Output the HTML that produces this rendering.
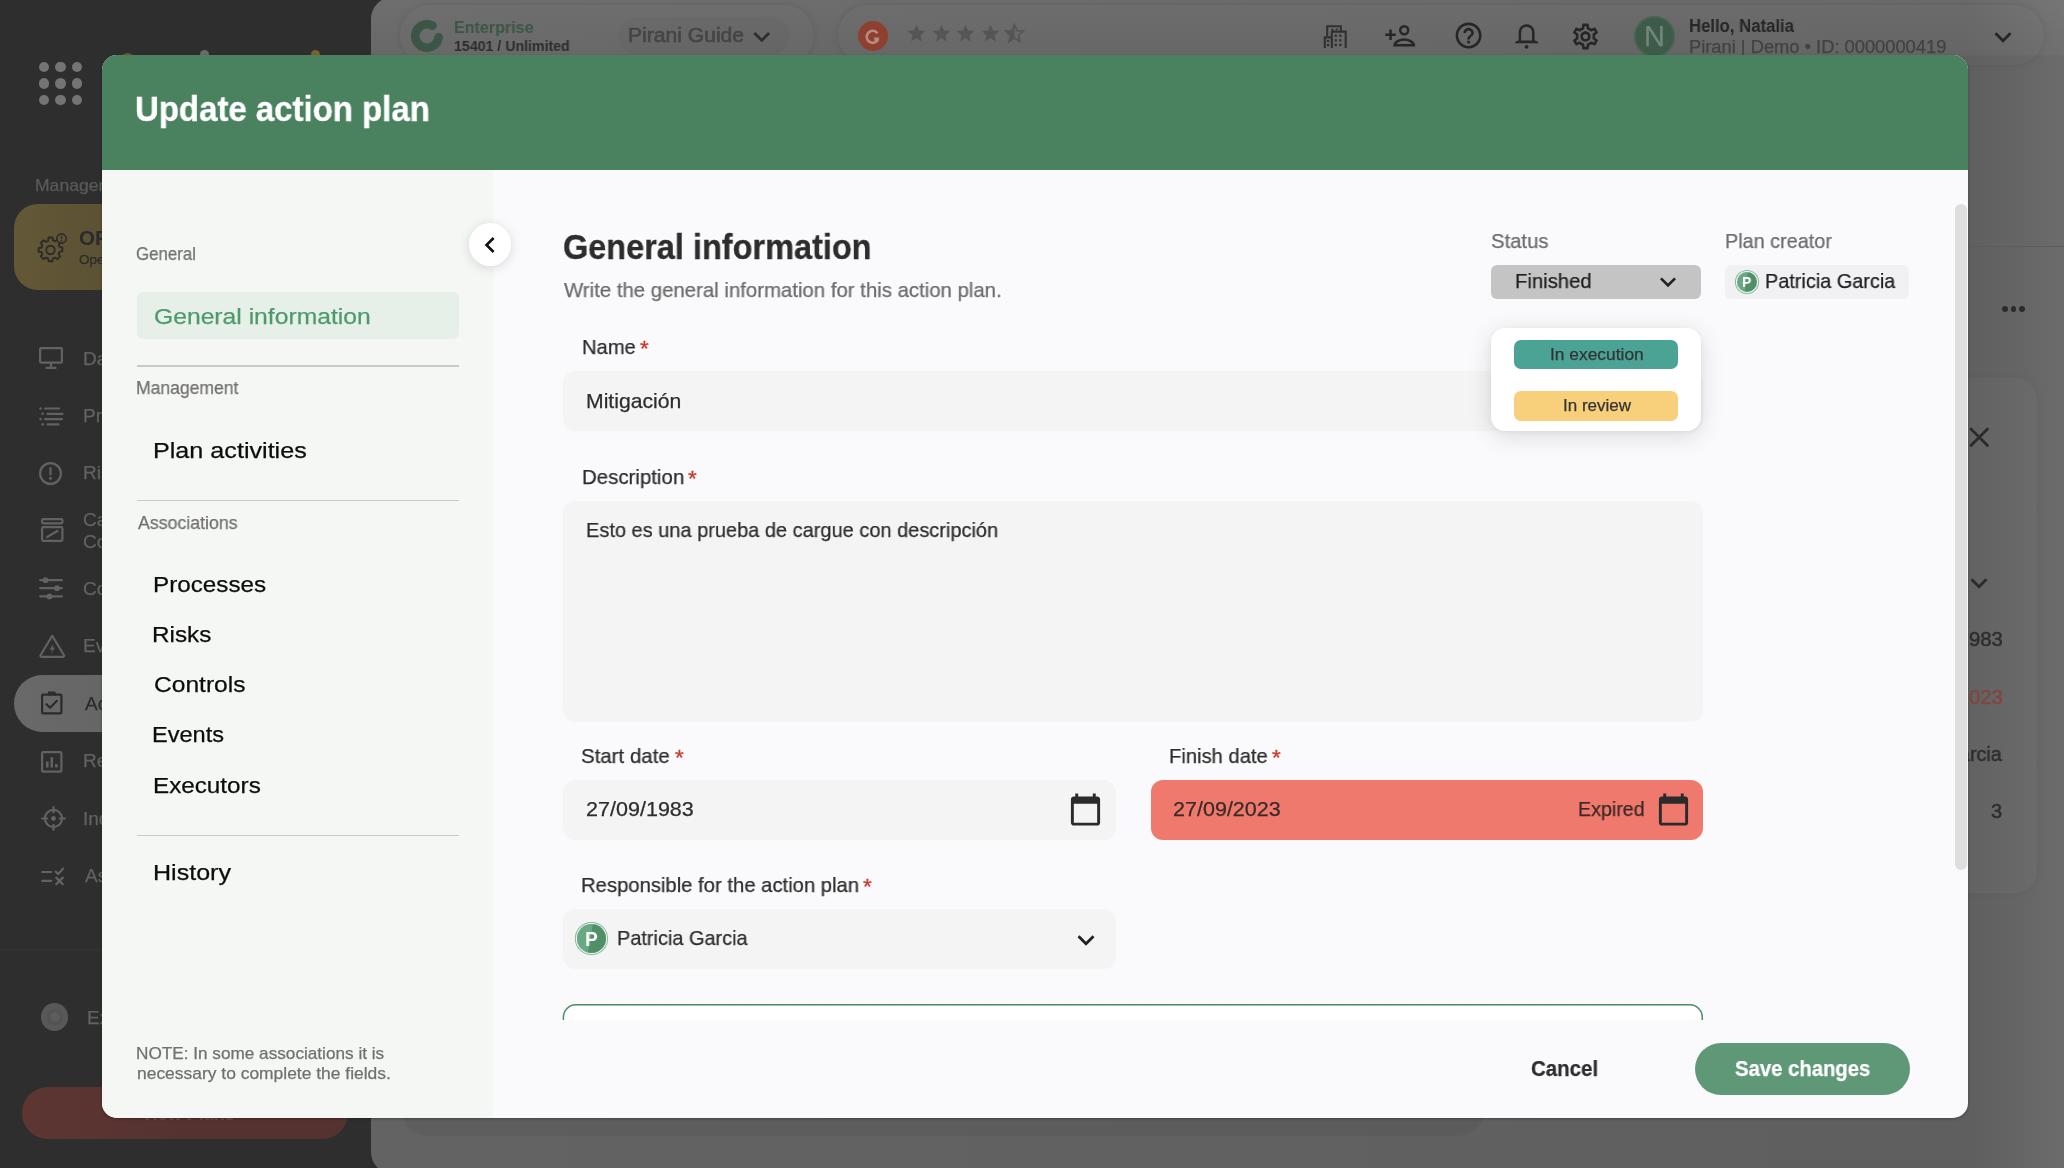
<!DOCTYPE html>
<html><head><meta charset="utf-8"><title>Update action plan</title>
<style>
html,body{margin:0;padding:0;}
body{width:2064px;height:1168px;overflow:hidden;position:relative;background:#2e2e2e;font-family:"Liberation Sans", sans-serif;}
.t{position:absolute;white-space:pre;transform-origin:0 50%;font-family:"Liberation Sans", sans-serif;will-change:transform;}
</style></head><body>
<div id="bg">
<div style="position:absolute;left:371px;top:-3px;width:1700px;height:1177px;background:linear-gradient(180deg,rgba(255,255,255,0.075) 0px,rgba(255,255,255,0.03) 58px,rgba(255,255,255,0) 59px),linear-gradient(90deg,#636363 0%,#5f5f5f 94%,#6b6c6b 100%);border-radius:0px;border-radius:22px 0 0 22px;"></div>
<div style="position:absolute;left:400px;top:5px;width:414px;height:60px;background:rgba(255,255,255,0.012);border-radius:30px;box-shadow:0 0 6px rgba(0,0,0,0.10);"></div>
<div style="position:absolute;left:617.5px;top:17px;width:172.5px;height:38px;background:rgba(0,0,0,0.02);border-radius:19px;"></div>
<div style="position:absolute;left:837.5px;top:5px;width:1206px;height:60px;background:rgba(255,255,255,0.012);border-radius:30px;box-shadow:0 0 6px rgba(0,0,0,0.10);"></div>
<div style="position:absolute;left:1968px;top:246px;width:96px;height:1px;background:#5c5c5c;border-radius:0px;"></div>
<div style="position:absolute;left:400px;top:1000px;width:1085px;height:136px;background:rgba(0,0,0,0.045);border-radius:28px;"></div>
<div style="position:absolute;left:1500px;top:378px;width:537px;height:515px;background:rgba(255,255,255,0.022);border-radius:22px;box-shadow:0 0 8px rgba(0,0,0,0.05);"></div>
<div style="position:absolute;left:38.75px;top:61.75px;width:10.5px;height:10.5px;background:#747474;border-radius:6px;"></div>
<div style="position:absolute;left:38.75px;top:78.0px;width:10.5px;height:10.5px;background:#747474;border-radius:6px;"></div>
<div style="position:absolute;left:38.75px;top:94.5px;width:10.5px;height:10.5px;background:#747474;border-radius:6px;"></div>
<div style="position:absolute;left:55.0px;top:61.75px;width:10.5px;height:10.5px;background:#747474;border-radius:6px;"></div>
<div style="position:absolute;left:55.0px;top:78.0px;width:10.5px;height:10.5px;background:#747474;border-radius:6px;"></div>
<div style="position:absolute;left:55.0px;top:94.5px;width:10.5px;height:10.5px;background:#747474;border-radius:6px;"></div>
<div style="position:absolute;left:71.5px;top:61.75px;width:10.5px;height:10.5px;background:#747474;border-radius:6px;"></div>
<div style="position:absolute;left:71.5px;top:78.0px;width:10.5px;height:10.5px;background:#747474;border-radius:6px;"></div>
<div style="position:absolute;left:71.5px;top:94.5px;width:10.5px;height:10.5px;background:#747474;border-radius:6px;"></div>
<div style="position:absolute;left:121px;top:53.3px;width:13px;height:12px;background:#74502c;border-radius:7px;"></div>
<div style="position:absolute;left:200px;top:50px;width:9px;height:12px;background:#6c6c6c;border-radius:5px;"></div>
<div style="position:absolute;left:311px;top:50px;width:9px;height:12px;background:#7d6230;border-radius:5px;"></div>
<div class="t" style="left:35.4px;top:175px;font-size:17px;line-height:22px;height:22px;color:#5a5a5a;transform:scaleX(1.0327);-webkit-text-stroke:0.25px #5a5a5a;">Management</div>
<div style="position:absolute;left:14.4px;top:204.2px;width:343px;height:86.1px;background:linear-gradient(90deg,#635836,#5a5034 30%);border-radius:24px;"></div>
<svg style="position:absolute;left:37.5px;top:232.5px;overflow:visible;" width="29" height="29" viewBox="0 0 29 29"><g fill="none" stroke="#2b2b2b" stroke-width="1.9" stroke-linejoin="round"><circle cx="12.5" cy="17" r="4.2"/><path d="M10.6 6.5h3.8l.6 2.9 2 .9 2.5-1.6 2.7 2.7-1.6 2.5.9 2 2.9.6v3.8l-2.9.6-.9 2 1.6 2.5-2.7 2.7-2.5-1.6-2 .9-.6 2.9h-3.8l-.6-2.9-2-.9-2.5 1.6-2.7-2.7 1.6-2.5-.9-2L.6 20.9v-3.8l2.9-.6.9-2-1.6-2.5 2.7-2.7 2.5 1.6 2-.9z" transform="translate(0,-2)"/></g><circle cx="23.5" cy="5.5" r="4.6" fill="#615636" stroke="#2b2b2b" stroke-width="1.6"/><rect x="22.8" y="2.8" width="1.5" height="3.4" fill="#2b2b2b"/><rect x="22.8" y="7" width="1.5" height="1.4" fill="#2b2b2b"/></svg>
<div class="t" style="left:79.1px;top:224px;font-size:20.5px;line-height:27px;height:27px;font-weight:700;color:#2b2b2b;">ORM</div>
<div class="t" style="left:79.4px;top:251px;font-size:13.5px;line-height:18px;height:18px;color:#2b2b2b;-webkit-text-stroke:0.25px #2b2b2b;">Operational risk</div>
<div style="position:absolute;left:14px;top:674.6px;width:343px;height:57.6px;background:linear-gradient(90deg,#696969,#626262 60%);border-radius:29px;"></div>
<div class="t" style="left:83.3px;top:346px;font-size:19px;line-height:25px;height:25px;color:#626262;-webkit-text-stroke:0.25px #626262;">Dashboard</div>
<div class="t" style="left:83.3px;top:403px;font-size:19px;line-height:25px;height:25px;color:#626262;-webkit-text-stroke:0.25px #626262;">Processes</div>
<div class="t" style="left:83.3px;top:460px;font-size:19px;line-height:25px;height:25px;color:#626262;-webkit-text-stroke:0.25px #626262;">Risks</div>
<div class="t" style="left:83.1px;top:507px;font-size:19px;line-height:25px;height:25px;color:#626262;-webkit-text-stroke:0.25px #626262;">Causes and</div>
<div class="t" style="left:83.1px;top:529px;font-size:19px;line-height:25px;height:25px;color:#626262;-webkit-text-stroke:0.25px #626262;">Consequences</div>
<div class="t" style="left:83.1px;top:576px;font-size:19px;line-height:25px;height:25px;color:#626262;-webkit-text-stroke:0.25px #626262;">Controls</div>
<div class="t" style="left:83.3px;top:633px;font-size:19px;line-height:25px;height:25px;color:#626262;-webkit-text-stroke:0.25px #626262;">Events</div>
<div class="t" style="left:84.8px;top:691px;font-size:19px;line-height:25px;height:25px;color:#2b2b2b;-webkit-text-stroke:0.25px #2b2b2b;">Action plans</div>
<div class="t" style="left:83.3px;top:748px;font-size:19px;line-height:25px;height:25px;color:#626262;-webkit-text-stroke:0.25px #626262;">Reports</div>
<div class="t" style="left:83.1px;top:806px;font-size:19px;line-height:25px;height:25px;color:#626262;-webkit-text-stroke:0.25px #626262;">Indicators</div>
<div class="t" style="left:84.8px;top:863px;font-size:19px;line-height:25px;height:25px;color:#626262;-webkit-text-stroke:0.25px #626262;">Assurance</div>
<svg style="position:absolute;left:38.5px;top:347px;overflow:visible;" width="24" height="22" viewBox="0 0 24 22"><g fill="none" stroke="#626262" stroke-width="2.2" stroke-linecap="round" stroke-linejoin="round"><rect x="1.1" y="1.1" width="21.8" height="14.5" rx="1"/><path d="M12 16v4.5M7.5 20.9h9"/></g></svg>
<svg style="position:absolute;left:39px;top:406.5px;overflow:visible;" width="25" height="19" viewBox="0 0 25 19"><g fill="none" stroke="#626262" stroke-width="2.2" stroke-linecap="round" stroke-linejoin="round"><path d="M6 1.5h14M8.5 6.8h15M6 12.1h17M8.5 17.4h11"/></g><g fill="#626262"><circle cx="1.6" cy="1.5" r="1.3"/><circle cx="3.6" cy="6.8" r="1.3"/><circle cx="1.6" cy="12.1" r="1.3"/><circle cx="3.6" cy="17.4" r="1.3"/></g></svg>
<svg style="position:absolute;left:38.5px;top:461.5px;overflow:visible;" width="23" height="23" viewBox="0 0 23 23"><g fill="none" stroke="#626262" stroke-width="2.2" stroke-linecap="round" stroke-linejoin="round"><circle cx="11.5" cy="11.5" r="10.4"/><path d="M11.5 6v6.5"/></g><circle cx="11.5" cy="16.3" r="1.5" fill="#626262"/></svg>
<svg style="position:absolute;left:40.6px;top:518px;overflow:visible;" width="22.5" height="24" viewBox="0 0 22.5 24"><g fill="none" stroke="#626262" stroke-width="2.2" stroke-linecap="round" stroke-linejoin="round"><rect x="1.1" y="1.1" width="20.3" height="4.2" rx="1.2"/><rect x="1.1" y="9.2" width="20.3" height="13.6" rx="1.2"/><path d="M6 19l10.5-6"/></g></svg>
<svg style="position:absolute;left:38.5px;top:577px;overflow:visible;" width="24" height="23" viewBox="0 0 24 23"><g fill="none" stroke="#626262" stroke-width="2.2" stroke-linecap="round" stroke-linejoin="round"><path d="M1.2 3.2h21.6M1.2 11.2h21.6M1.2 19.4h21.6"/></g><g fill="#626262"><circle cx="6.5" cy="3.2" r="2.9"/><circle cx="18" cy="11.2" r="2.9"/><circle cx="10.5" cy="19.4" r="2.9"/></g></svg>
<svg style="position:absolute;left:38.5px;top:634px;overflow:visible;" width="26.5" height="24" viewBox="0 0 26.5 24"><g fill="none" stroke="#626262" stroke-width="2.2" stroke-linecap="round" stroke-linejoin="round"><path d="M13.2 1.8L25 21.2a1.2 1.2 0 0 1-1 1.7H2.5a1.2 1.2 0 0 1-1-1.7z"/></g><path d="M14.5 9.5l-4 6h2.6l-1 4 4-6h-2.7z" fill="#626262"/></svg>
<svg style="position:absolute;left:41px;top:690.6px;overflow:visible;" width="21.5" height="23.5" viewBox="0 0 21.5 23.5"><g fill="none" stroke="#2b2b2b" stroke-width="2.2" stroke-linecap="round" stroke-linejoin="round"><rect x="1.1" y="3.6" width="19.3" height="18.8" rx="1.2"/><path d="M8 3.4V1.6h5.5v1.8"/><path d="M5.5 13.2l3.6 3.6 6.8-7"/></g></svg>
<svg style="position:absolute;left:41px;top:750.7px;overflow:visible;" width="21.5" height="21.7" viewBox="0 0 21.5 21.7"><g fill="none" stroke="#626262" stroke-width="2.2" stroke-linecap="round" stroke-linejoin="round"><rect x="1.1" y="1.1" width="19.3" height="19.5" rx="1.2"/><path d="M6.3 16.5V10.5M10.8 16.5V6.2M15.3 16.5V13" stroke-linecap="butt" stroke-width="2.6"/></g></svg>
<svg style="position:absolute;left:40.5px;top:805.8px;overflow:visible;" width="25" height="25" viewBox="0 0 25 25"><g fill="none" stroke="#626262" stroke-width="2.2" stroke-linecap="round" stroke-linejoin="round"><circle cx="12.5" cy="12.5" r="8.6"/><path d="M12.5 1.2v5M12.5 18.8v5M1.2 12.5h5M18.8 12.5h5"/></g><circle cx="12.5" cy="12.5" r="2.4" fill="#626262"/></svg>
<svg style="position:absolute;left:41px;top:866.5px;overflow:visible;" width="23.5" height="19" viewBox="0 0 23.5 19"><g fill="none" stroke="#626262" stroke-width="2.2" stroke-linecap="round" stroke-linejoin="round"><path d="M1.2 5h9M1.2 13.8h9"/><path d="M14.8 4.6l2.4 2.4 5-5.4M15.2 10.6l6.6 6.6M21.8 10.6l-6.6 6.6"/></g></svg>
<div style="position:absolute;left:0px;top:949px;width:371px;height:1px;background:#343434;border-radius:0px;"></div>
<div style="position:absolute;left:40.85px;top:1003.25px;width:27.5px;height:27.5px;background:#585858;border-radius:14px;"></div>
<div style="position:absolute;left:46.6px;top:1009px;width:16px;height:16px;background:#505050;border-radius:8px;border:3px solid #535353;box-sizing:border-box;background:#5c5c5c;"></div>
<div class="t" style="left:86.8px;top:1005px;font-size:19px;line-height:25px;height:25px;color:#626262;-webkit-text-stroke:0.25px #626262;">Explore</div>
<div style="position:absolute;left:21.8px;top:1087px;width:326px;height:51.7px;background:linear-gradient(90deg,#5d3632,#553230 50%);border-radius:26px;"></div>
<div class="t" style="left:140.5px;top:1101px;font-size:19px;line-height:25px;height:25px;font-weight:700;color:#6e504c;transform:scaleX(0.9484);">View Plans</div>
<svg style="position:absolute;left:411px;top:20px;overflow:visible;" width="32" height="32" viewBox="0 0 32 32"><path d="M27.64 17.22A11.7 11.7 0 1 1 21.49 5.67" fill="none" stroke="#3b5646" stroke-width="8.6" stroke-linecap="round"/></svg>
<div class="t" style="left:453.6px;top:17px;font-size:16.5px;line-height:21px;height:21px;font-weight:700;color:#3b5646;transform:scaleX(0.9745);">Enterprise</div>
<div class="t" style="left:453.8px;top:37px;font-size:14.5px;line-height:19px;height:19px;font-weight:700;color:#2d2d2d;transform:scaleX(0.9768);">15401 / Unlimited</div>
<div class="t" style="left:627.9px;top:21px;font-size:20.5px;line-height:27px;height:27px;color:#454545;transform:scaleX(1.0285);-webkit-text-stroke:0.6px #454545;">Pirani Guide</div>
<svg style="position:absolute;left:745.4px;top:19.5px;" width="33.5" height="33.5" viewBox="0 0 24 24"><path d="M7.41 8.59L12 13.17l4.59-4.58L18 10l-6 6-6-6 1.41-1.41z" fill="#2d2d2d"/></svg>
<div style="position:absolute;left:858.25px;top:20.5px;width:30px;height:30px;background:#8f3f30;border-radius:15px;"></div>
<svg style="position:absolute;left:864px;top:27px;overflow:visible;" width="19" height="18" viewBox="0 0 19 18"><path d="M13.5 6.2A6 6 0 1 0 14.3 12" fill="none" stroke="#b88a80" stroke-width="2.6"/><path d="M10 10.5h5.5l-2 3.5h-3z" fill="#b88a80"/></svg>
<svg style="position:absolute;left:906.25px;top:22.5px;" width="21" height="21" viewBox="0 0 24 24"><path d="M12 17.27L18.18 21l-1.64-7.03L22 9.24l-7.19-.61L12 2 9.19 8.63 2 9.24l5.46 4.73L5.82 21z" fill="#555555"/></svg>
<svg style="position:absolute;left:930.75px;top:22.5px;" width="21" height="21" viewBox="0 0 24 24"><path d="M12 17.27L18.18 21l-1.64-7.03L22 9.24l-7.19-.61L12 2 9.19 8.63 2 9.24l5.46 4.73L5.82 21z" fill="#555555"/></svg>
<svg style="position:absolute;left:955.0px;top:22.5px;" width="21" height="21" viewBox="0 0 24 24"><path d="M12 17.27L18.18 21l-1.64-7.03L22 9.24l-7.19-.61L12 2 9.19 8.63 2 9.24l5.46 4.73L5.82 21z" fill="#555555"/></svg>
<svg style="position:absolute;left:979.5px;top:22.5px;" width="21" height="21" viewBox="0 0 24 24"><path d="M12 17.27L18.18 21l-1.64-7.03L22 9.24l-7.19-.61L12 2 9.19 8.63 2 9.24l5.46 4.73L5.82 21z" fill="#555555"/></svg>
<svg style="position:absolute;left:1004.0px;top:22.5px" width="21" height="21" viewBox="0 0 24 24"><path d="M12 17.27L18.18 21l-1.64-7.03L22 9.24l-7.19-.61L12 2 9.19 8.63 2 9.24l5.46 4.73L5.82 21z" fill="none" stroke="#555555" stroke-width="2"/><path d="M12 17.27V2L9.19 8.63 2 9.24l5.46 4.73L5.82 21z" fill="#555555"/></svg>
<svg style="position:absolute;left:1323px;top:23.5px;overflow:visible;" width="25" height="25" viewBox="0 0 25 25"><g fill="none" stroke="#303030" stroke-width="2.1"><path d="M4.2 12.5V2.2h13.6v5.6"/><path d="M8.8 24V7.6h13.9V24"/><path d="M1.8 24V13.4h7"/><path d="M8.5 4.8l2.2 2M14.5 4.6l-1.6 1.6" stroke-width="1.4"/></g><g fill="#303030"><rect x="3.9" y="15.8" width="2.3" height="2.3"/><rect x="3.9" y="20" width="2.3" height="2.3"/><rect x="11.6" y="10.6" width="2.3" height="2.3"/><rect x="16.2" y="10.6" width="2.3" height="2.3"/><rect x="11.6" y="15.2" width="2.3" height="2.3"/><rect x="16.2" y="15.2" width="2.3" height="2.3"/><rect x="11.6" y="19.8" width="2.3" height="2.3"/><rect x="16.2" y="19.8" width="2.3" height="2.3"/></g></svg>
<svg style="position:absolute;left:1385px;top:24px;overflow:visible;" width="31" height="24" viewBox="0 0 31 24"><g fill="none" stroke="#262626" stroke-width="2.5" stroke-linejoin="round"><path d="M0.3 10.7h10.5M5.55 5.5v10.4"/><circle cx="19.2" cy="6.3" r="4"/><path d="M9.6 21.2c.4-3.6 5-5.6 9.6-5.6s9.2 2 9.6 5.6z" stroke-linejoin="miter"/></g></svg>
<svg style="position:absolute;left:1453.15px;top:20.15px;" width="31.2" height="31.2" viewBox="0 0 24 24"><path d="M11 18h2v-2h-2v2zm1-16C6.48 2 2 6.48 2 12s4.48 10 10 10 10-4.48 10-10S17.52 2 12 2zm0 18c-4.41 0-8-3.59-8-8s3.59-8 8-8 8 3.59 8 8-3.59 8-8 8zm0-14c-2.21 0-4 1.79-4 4h2c0-1.1.9-2 2-2s2 .9 2 2c0 2-3 1.75-3 5h2c0-2.25 3-2.5 3-5 0-2.21-1.79-4-4-4z" fill="#262626"/></svg>
<svg style="position:absolute;left:1514px;top:22px;overflow:visible;" width="26" height="28" viewBox="0 0 26 28"><g fill="none" stroke="#262626" stroke-width="2.5" stroke-linejoin="round"><path d="M5.9 19V10.1a6.7 6.7 0 0 1 13.4 0V19"/><path d="M1.6 20.6l2.2-1.4h17.6l2.2 1.4z" fill="#262626" stroke-width="1.2"/></g><circle cx="12.6" cy="24.8" r="1.9" fill="#262626"/></svg>
<svg style="position:absolute;left:1570px;top:20.5px;" width="31" height="31" viewBox="0 0 24 24"><path d="M19.43 12.98c.04-.32.07-.64.07-.98 0-.34-.03-.66-.07-.98l2.11-1.65c.19-.15.24-.42.12-.64l-2-3.46c-.09-.16-.26-.25-.44-.25-.06 0-.12.01-.17.03l-2.49 1c-.52-.4-1.08-.73-1.69-.98l-.38-2.65C14.46 2.18 14.25 2 14 2h-4c-.25 0-.46.18-.49.42l-.38 2.65c-.61.25-1.17.59-1.69.98l-2.49-1c-.06-.02-.12-.03-.18-.03-.17 0-.34.09-.43.25l-2 3.46c-.13.22-.07.49.12.64l2.11 1.65c-.04.32-.07.65-.07.98 0 .33.03.66.07.98l-2.11 1.65c-.19.15-.24.42-.12.64l2 3.46c.09.16.26.25.44.25.06 0 .12-.01.17-.03l2.49-1c.52.4 1.08.73 1.69.98l.38 2.65c.03.24.24.42.49.42h4c.25 0 .46-.18.49-.42l.38-2.65c.61-.25 1.17-.59 1.69-.98l2.49 1c.06.02.12.03.18.03.17 0 .34-.09.43-.25l2-3.46c.12-.22.07-.49-.12-.64l-2.11-1.65zm-1.98-1.71c.04.31.05.52.05.73 0 .21-.02.43-.05.73l-.14 1.13.89.7 1.08.84-.7 1.21-1.27-.51-1.04-.42-.9.68c-.43.32-.84.56-1.25.73l-1.06.43-.16 1.13-.2 1.35h-1.4l-.19-1.35-.16-1.13-1.06-.43c-.43-.18-.83-.41-1.23-.71l-.91-.7-1.06.43-1.27.51-.7-1.21 1.08-.84.89-.7-.14-1.13c-.03-.31-.05-.54-.05-.74s.02-.43.05-.73l.14-1.13-.89-.7-1.08-.84.7-1.21 1.27.51 1.04.42.9-.68c.43-.32.84-.56 1.25-.73l1.06-.43.16-1.13.2-1.35h1.39l.19 1.35.16 1.13 1.06.43c.43.18.83.41 1.23.71l.91.7 1.06-.43 1.27-.51.7 1.21-1.07.85-.89.7.14 1.13zM12 8c-2.21 0-4 1.79-4 4s1.79 4 4 4 4-1.79 4-4-1.79-4-4-4zm0 6c-1.1 0-2-.9-2-2s.9-2 2-2 2 .9 2 2-.9 2-2 2z" fill="#262626"/></svg>
<div style="position:absolute;left:1633.75px;top:15.5px;width:41px;height:41px;background:#3e5a49;border-radius:21px;box-shadow:inset 0 0 0 1.5px #4b6656;"></div>
<div class="t" style="left:1643.8px;top:17px;font-size:29px;line-height:38px;height:38px;color:#6f887a;-webkit-text-stroke:0.25px #6f887a;">N</div>
<div class="t" style="left:1688.7px;top:15px;font-size:17.5px;line-height:23px;height:23px;font-weight:700;color:#262626;transform:scaleX(0.9544);">Hello, Natalia</div>
<div class="t" style="left:1689.0px;top:36px;font-size:17.6px;line-height:23px;height:23px;color:#424242;transform:scaleX(1.0401);-webkit-text-stroke:0.25px #424242;">Pirani | Demo • ID: 0000000419</div>
<svg style="position:absolute;left:1986.4px;top:19.5px;" width="34" height="34" viewBox="0 0 24 24"><path d="M7.41 8.59L12 13.17l4.59-4.58L18 10l-6 6-6-6 1.41-1.41z" fill="#262626"/></svg>
<div style="position:absolute;left:2002.3px;top:306.1px;width:5.8px;height:5.8px;background:#2b2b2b;border-radius:3px;"></div>
<div style="position:absolute;left:2010.6999999999998px;top:306.1px;width:5.8px;height:5.8px;background:#2b2b2b;border-radius:3px;"></div>
<div style="position:absolute;left:2019.1px;top:306.1px;width:5.8px;height:5.8px;background:#2b2b2b;border-radius:3px;"></div>
<svg style="position:absolute;left:1970px;top:428px;overflow:visible;" width="18.5" height="18.5" viewBox="0 0 18.5 18.5"><path d="M1 1l16.5 16.5M17.5 1L1 17.5" fill="none" stroke="#2b2b2b" stroke-width="2.8" stroke-linecap="round"/></svg>
<svg style="position:absolute;left:1962px;top:566px;" width="34" height="34" viewBox="0 0 24 24"><path d="M7.41 8.59L12 13.17l4.59-4.58L18 10l-6 6-6-6 1.41-1.41z" fill="#2b2b2b"/></svg>
<div class="t" style="left:1900.7px;top:626px;font-size:20px;line-height:26px;height:26px;color:#2e2e2e;transform:scaleX(1.0176);-webkit-text-stroke:0.5px #2e2e2e;">27/09/1983</div>
<div class="t" style="left:1900.7px;top:684px;font-size:20px;line-height:26px;height:26px;color:#80463f;transform:scaleX(1.0176);-webkit-text-stroke:0.5px #80463f;">27/09/2023</div>
<div class="t" style="left:1871.9px;top:741px;font-size:20px;line-height:26px;height:26px;color:#2e2e2e;transform:scaleX(0.9898);-webkit-text-stroke:0.5px #2e2e2e;">Patricia Garcia</div>
<div class="t" style="left:1990.6px;top:798px;font-size:20px;line-height:26px;height:26px;color:#2e2e2e;-webkit-text-stroke:0.5px #2e2e2e;">3</div>
</div>
<div id="modal">
<div style="position:absolute;left:102px;top:55px;width:1866px;height:1063px;background:#fafafc;border-radius:15px;overflow:hidden;box-shadow:0 1px 3px rgba(0,0,0,0.28);"></div>
<div style="position:absolute;left:102px;top:55px;width:1866px;height:114.5px;background:#4a815f;border-radius:0px;border-radius:15px 15px 0 0;"></div>
<div class="t" style="left:134.9px;top:87px;font-size:34.6px;line-height:45px;height:45px;font-weight:700;color:#ffffff;transform:scaleX(0.9531);-webkit-text-stroke:0.35px #ffffff;">Update action plan</div>
<div style="position:absolute;left:102px;top:169.5px;width:391.3px;height:948.5px;background:#f5f7f4;border-radius:0px;border-radius:0 0 0 15px;"></div>
<div class="t" style="left:136.0px;top:243px;font-size:18px;line-height:23px;height:23px;color:#707070;transform:scaleX(0.9364);-webkit-text-stroke:0.25px #707070;">General</div>
<div style="position:absolute;left:137px;top:292px;width:322px;height:47px;background:#e6efe8;border-radius:6px;"></div>
<div class="t" style="left:153.8px;top:301px;font-size:22.8px;line-height:30px;height:30px;color:#4f9a6d;transform:scaleX(1.0823);-webkit-text-stroke:0.25px #4f9a6d;">General information</div>
<div style="position:absolute;left:137px;top:365px;width:322px;height:1.5px;background:#c9c9c9;border-radius:0px;"></div>
<div class="t" style="left:136.2px;top:377px;font-size:18px;line-height:23px;height:23px;color:#707070;transform:scaleX(0.9752);-webkit-text-stroke:0.25px #707070;">Management</div>
<div class="t" style="left:153.1px;top:435px;font-size:22.8px;line-height:30px;height:30px;color:#0c0c0c;transform:scaleX(1.1033);-webkit-text-stroke:0.25px #0c0c0c;">Plan activities</div>
<div style="position:absolute;left:137px;top:499.7px;width:322px;height:1.5px;background:#c9c9c9;border-radius:0px;"></div>
<div class="t" style="left:137.6px;top:512px;font-size:18px;line-height:23px;height:23px;color:#707070;transform:scaleX(0.9856);-webkit-text-stroke:0.25px #707070;">Associations</div>
<div class="t" style="left:153.1px;top:569px;font-size:22.8px;line-height:30px;height:30px;color:#0c0c0c;transform:scaleX(1.0630);-webkit-text-stroke:0.25px #0c0c0c;">Processes</div>
<div class="t" style="left:152.3px;top:619px;font-size:22.8px;line-height:30px;height:30px;color:#0c0c0c;transform:scaleX(1.0657);-webkit-text-stroke:0.25px #0c0c0c;">Risks</div>
<div class="t" style="left:153.9px;top:669px;font-size:22.8px;line-height:30px;height:30px;color:#0c0c0c;transform:scaleX(1.0779);-webkit-text-stroke:0.25px #0c0c0c;">Controls</div>
<div class="t" style="left:152.4px;top:719px;font-size:22.8px;line-height:30px;height:30px;color:#0c0c0c;transform:scaleX(1.0340);-webkit-text-stroke:0.25px #0c0c0c;">Events</div>
<div class="t" style="left:153.1px;top:770px;font-size:22.8px;line-height:30px;height:30px;color:#0c0c0c;transform:scaleX(1.0630);-webkit-text-stroke:0.25px #0c0c0c;">Executors</div>
<div style="position:absolute;left:137px;top:834.5px;width:322px;height:1.5px;background:#c9c9c9;border-radius:0px;"></div>
<div class="t" style="left:153.1px;top:857px;font-size:22.8px;line-height:30px;height:30px;color:#0c0c0c;transform:scaleX(1.0992);-webkit-text-stroke:0.25px #0c0c0c;">History</div>
<div class="t" style="left:136.3px;top:1043px;font-size:17px;line-height:22px;height:22px;color:#707070;transform:scaleX(1.0102);-webkit-text-stroke:0.25px #707070;">NOTE: In some associations it is</div>
<div class="t" style="left:136.5px;top:1063px;font-size:17px;line-height:22px;height:22px;color:#707070;transform:scaleX(1.0253);-webkit-text-stroke:0.25px #707070;">necessary to complete the fields.</div>
<div style="position:absolute;left:468.75px;top:223.25px;width:42.5px;height:42.5px;background:#ffffff;border-radius:22px;box-shadow:0 2px 12px rgba(0,0,0,0.13);"></div>
<svg style="position:absolute;left:473.8px;top:229px;" width="32" height="32" viewBox="0 0 24 24"><path d="M15.41 7.41L14 6l-6 6 6 6 1.41-1.41L10.83 12z" fill="#111"/></svg>
<div class="t" style="left:562.7px;top:224px;font-size:35.5px;line-height:46px;height:46px;font-weight:700;color:#2d2d2d;transform:scaleX(0.9149);-webkit-text-stroke:0.3px #2d2d2d;">General information</div>
<div class="t" style="left:563.7px;top:276px;font-size:20.9px;line-height:27px;height:27px;color:#6c6c6c;transform:scaleX(0.9748);-webkit-text-stroke:0.25px #6c6c6c;">Write the general information for this action plan.</div>
<div class="t" style="left:1490.7px;top:227px;font-size:20.9px;line-height:27px;height:27px;color:#6c6c6c;transform:scaleX(0.9709);-webkit-text-stroke:0.25px #6c6c6c;">Status</div>
<div class="t" style="left:1724.6px;top:227px;font-size:20.9px;line-height:27px;height:27px;color:#6c6c6c;transform:scaleX(0.9490);-webkit-text-stroke:0.25px #6c6c6c;">Plan creator</div>
<div style="position:absolute;left:1491.25px;top:265px;width:210px;height:34px;background:#c4c4c4;border-radius:6px;"></div>
<div class="t" style="left:1514.6px;top:267px;font-size:20.9px;line-height:27px;height:27px;color:#1f1f1f;transform:scaleX(0.9710);-webkit-text-stroke:0.25px #1f1f1f;">Finished</div>
<svg style="position:absolute;left:1652px;top:265.6px;" width="32" height="32" viewBox="0 0 24 24"><path d="M7.41 8.59L12 13.17l4.59-4.58L18 10l-6 6-6-6 1.41-1.41z" fill="#222"/></svg>
<div style="position:absolute;left:1724.5px;top:265px;width:184px;height:34px;background:#f1f1f3;border-radius:6px;"></div>
<div style="position:absolute;left:1737.0px;top:271.9px;width:20px;height:20px;border-radius:50%;background:linear-gradient(100deg,#68a884 0%,#68a884 46%,#4f9068 47%,#4f9068 100%);box-shadow:0 0 0 1.1px #f4f8f5, 0 0 0 2.1px #86b99a;"></div><div class="t" style="left:1742.2px;top:272px;font-size:15px;line-height:20px;height:20px;font-weight:700;color:#ffffff;transform:scaleX(0.9231);">P</div>
<div class="t" style="left:1765.4px;top:267px;font-size:20.9px;line-height:27px;height:27px;color:#1f1f1f;transform:scaleX(0.9514);-webkit-text-stroke:0.25px #1f1f1f;">Patricia Garcia</div>
<div class="t" style="left:581.8px;top:333px;font-size:20.9px;line-height:27px;height:27px;color:#2d2d2d;transform:scaleX(0.9659);-webkit-text-stroke:0.25px #2d2d2d;">Name</div>
<div class="t" style="left:640.1px;top:334px;font-size:22.5px;line-height:29px;height:29px;color:#cc3a2c;-webkit-text-stroke:0.3px #cc3a2c;">*</div>
<div style="position:absolute;left:562.6px;top:371px;width:1140.4px;height:60px;background:#f4f4f4;border-radius:12px;"></div>
<div class="t" style="left:585.8px;top:387px;font-size:20.9px;line-height:27px;height:27px;color:#2d2d2d;transform:scaleX(1.0136);-webkit-text-stroke:0.25px #2d2d2d;">Mitigación</div>
<div class="t" style="left:581.8px;top:463px;font-size:20.9px;line-height:27px;height:27px;color:#2d2d2d;transform:scaleX(0.9782);-webkit-text-stroke:0.25px #2d2d2d;">Description</div>
<div class="t" style="left:688.2px;top:464px;font-size:22.5px;line-height:29px;height:29px;color:#cc3a2c;-webkit-text-stroke:0.3px #cc3a2c;">*</div>
<div style="position:absolute;left:562.6px;top:500.5px;width:1140.4px;height:221.3px;background:#f4f4f4;border-radius:12px;"></div>
<div class="t" style="left:585.9px;top:516px;font-size:20.9px;line-height:27px;height:27px;color:#2d2d2d;transform:scaleX(0.9566);-webkit-text-stroke:0.25px #2d2d2d;">Esto es una prueba de cargue con descripción</div>
<div class="t" style="left:580.9px;top:742px;font-size:20.9px;line-height:27px;height:27px;color:#2d2d2d;transform:scaleX(0.9790);-webkit-text-stroke:0.25px #2d2d2d;">Start date</div>
<div class="t" style="left:675.1px;top:743px;font-size:22.5px;line-height:29px;height:29px;color:#cc3a2c;-webkit-text-stroke:0.3px #cc3a2c;">*</div>
<div style="position:absolute;left:562.6px;top:779.5px;width:553.15px;height:60px;background:#f4f4f4;border-radius:12px;"></div>
<div class="t" style="left:585.7px;top:795px;font-size:20.9px;line-height:27px;height:27px;color:#2d2d2d;transform:scaleX(1.0313);-webkit-text-stroke:0.25px #2d2d2d;">27/09/1983</div>
<svg style="position:absolute;left:1068.35px;top:792.1px;" width="35" height="35" viewBox="0 0 24 24"><path d="M20 3h-1V1h-2v2H7V1H5v2H4c-1.1 0-2 .9-2 2v16c0 1.1.9 2 2 2h16c1.1 0 2-.9 2-2V5c0-1.1-.9-2-2-2zm0 18H4V8h16v13z" fill="#2b2b2b"/></svg>
<div class="t" style="left:1168.8px;top:742px;font-size:20.9px;line-height:27px;height:27px;color:#2d2d2d;transform:scaleX(0.9660);-webkit-text-stroke:0.25px #2d2d2d;">Finish date</div>
<div class="t" style="left:1272.1px;top:743px;font-size:22.5px;line-height:29px;height:29px;color:#cc3a2c;-webkit-text-stroke:0.3px #cc3a2c;">*</div>
<div style="position:absolute;left:1150.75px;top:779.5px;width:552.5px;height:60px;background:#ef796d;border-radius:12px;"></div>
<div class="t" style="left:1172.7px;top:795px;font-size:20.9px;line-height:27px;height:27px;color:#3a2a28;transform:scaleX(1.0306);-webkit-text-stroke:0.25px #3a2a28;">27/09/2023</div>
<div class="t" style="left:1578.4px;top:795px;font-size:20.9px;line-height:27px;height:27px;color:#3a2a28;transform:scaleX(0.9400);-webkit-text-stroke:0.25px #3a2a28;">Expired</div>
<svg style="position:absolute;left:1656.3px;top:792.1px;" width="35" height="35" viewBox="0 0 24 24"><path d="M20 3h-1V1h-2v2H7V1H5v2H4c-1.1 0-2 .9-2 2v16c0 1.1.9 2 2 2h16c1.1 0 2-.9 2-2V5c0-1.1-.9-2-2-2zm0 18H4V8h16v13z" fill="#2b2b2b"/></svg>
<div class="t" style="left:580.9px;top:871px;font-size:20.9px;line-height:27px;height:27px;color:#2d2d2d;transform:scaleX(0.9695);-webkit-text-stroke:0.25px #2d2d2d;">Responsible for the action plan</div>
<div class="t" style="left:863.2px;top:872px;font-size:22.5px;line-height:29px;height:29px;color:#cc3a2c;-webkit-text-stroke:0.3px #cc3a2c;">*</div>
<div style="position:absolute;left:562.6px;top:909px;width:553.15px;height:60px;background:#f4f4f4;border-radius:12px;"></div>
<div style="position:absolute;left:577.45px;top:924.1px;width:28.6px;height:28.6px;border-radius:50%;background:linear-gradient(100deg,#68a884 0%,#68a884 46%,#4f9068 47%,#4f9068 100%);box-shadow:0 0 0 1.1px #f4f8f5, 0 0 0 2.1px #86b99a;"></div><div class="t" style="left:585.3px;top:925px;font-size:21px;line-height:27px;height:27px;font-weight:700;color:#ffffff;transform:scaleX(0.9026);">P</div>
<div class="t" style="left:617.2px;top:924px;font-size:20.9px;line-height:27px;height:27px;color:#2d2d2d;transform:scaleX(0.9536);-webkit-text-stroke:0.25px #2d2d2d;">Patricia Garcia</div>
<svg style="position:absolute;left:1068.5px;top:922.5px;" width="34" height="34" viewBox="0 0 24 24"><path d="M7.41 8.59L12 13.17l4.59-4.58L18 10l-6 6-6-6 1.41-1.41z" fill="#222"/></svg>
<svg style="position:absolute;left:560px;top:1000px" width="1150" height="20" viewBox="0 0 1150 20"><rect x="3.4" y="4.75" width="1138.9" height="60" rx="12.5" fill="#ffffff" stroke="#4a8a64" stroke-width="1.5"/></svg>
<div style="position:absolute;left:1491.25px;top:328px;width:210px;height:103.25px;background:#ffffff;border-radius:14px;box-shadow:0 5px 24px rgba(0,0,0,0.13), 0 1px 5px rgba(0,0,0,0.05);"></div>
<div style="position:absolute;left:1514.25px;top:339.5px;width:163.75px;height:29.25px;background:#4ba396;border-radius:7px;"></div>
<div class="t" style="left:1550.3px;top:344px;font-size:17px;line-height:22px;height:22px;color:#333;transform:scaleX(1.0228);-webkit-text-stroke:0.25px #333;">In execution</div>
<div style="position:absolute;left:1514.25px;top:391.25px;width:163.75px;height:29.25px;background:#f8cf7a;border-radius:7px;"></div>
<div class="t" style="left:1562.8px;top:395px;font-size:17px;line-height:22px;height:22px;color:#333;transform:scaleX(0.9960);-webkit-text-stroke:0.25px #333;">In review</div>
<div style="position:absolute;left:1954.8px;top:204px;width:12.7px;height:666px;background:#dedede;border-radius:6.3px;"></div>
<div class="t" style="left:1531.3px;top:1055px;font-size:21.6px;line-height:28px;height:28px;font-weight:700;color:#2d2d2d;transform:scaleX(0.9485);-webkit-text-stroke:0.25px #2d2d2d;">Cancel</div>
<div style="position:absolute;left:1695.4px;top:1043px;width:214.4px;height:51.5px;background:#5f9876;border-radius:26px;"></div>
<div class="t" style="left:1735.4px;top:1055px;font-size:21.6px;line-height:28px;height:28px;font-weight:700;color:#ffffff;transform:scaleX(0.9392);-webkit-text-stroke:0.25px #ffffff;">Save changes</div>
</div>
</body></html>
